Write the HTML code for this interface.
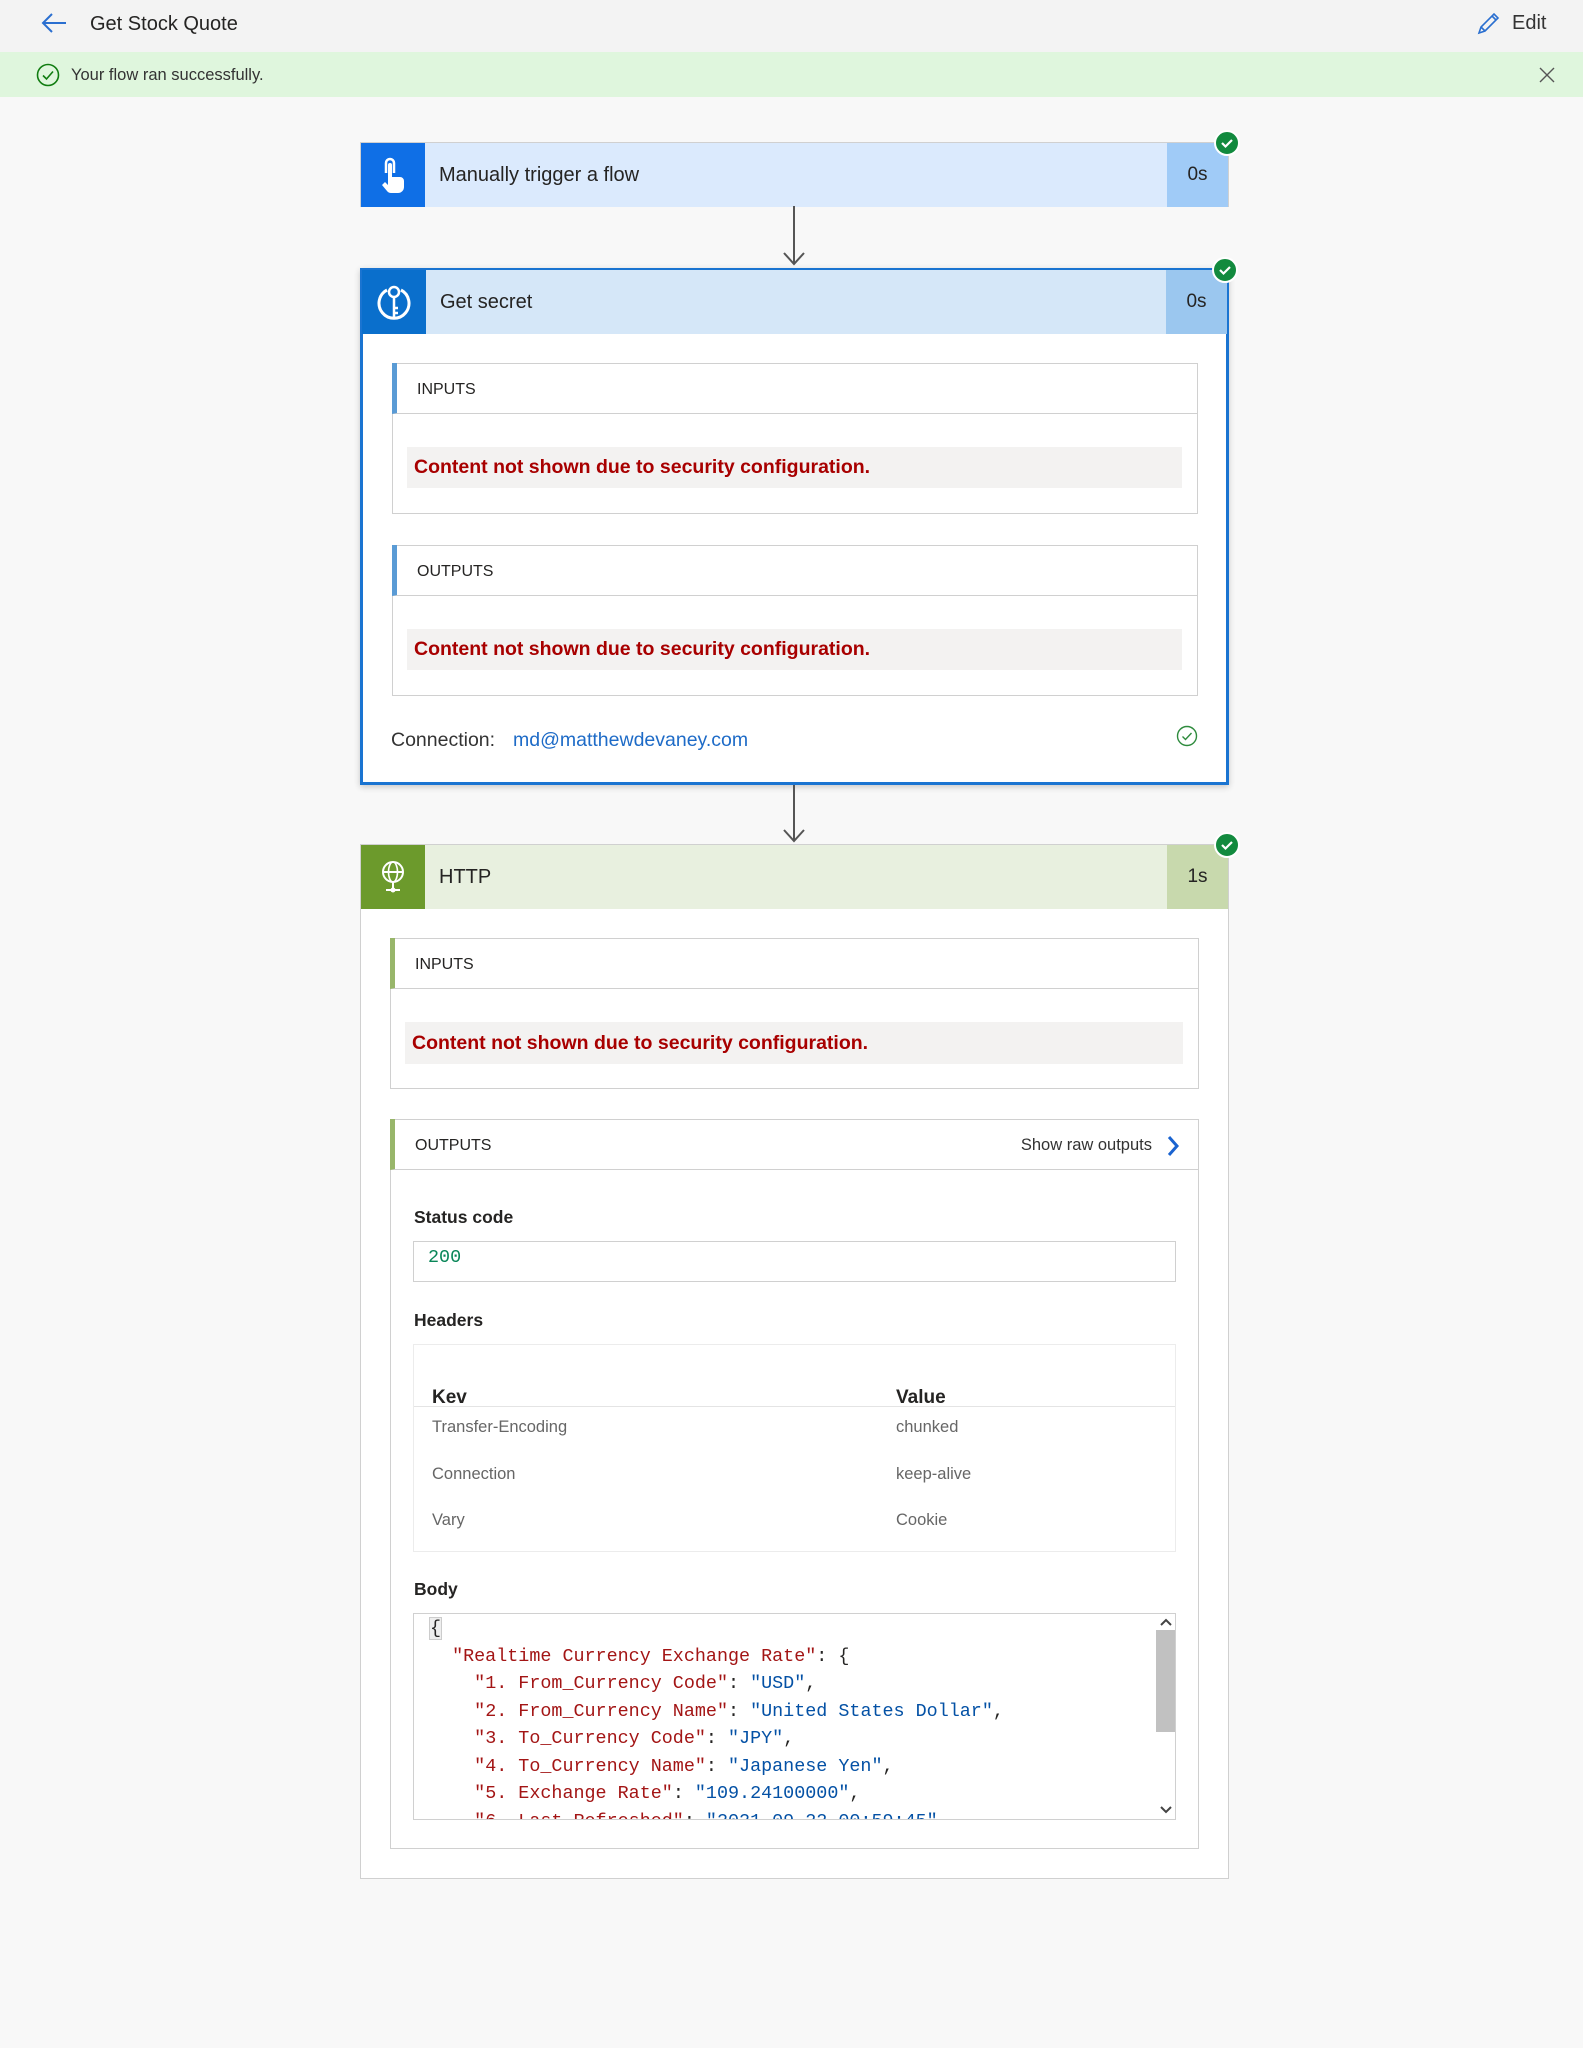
<!DOCTYPE html>
<html><head><meta charset="utf-8"><style>
*{box-sizing:border-box;margin:0;padding:0}
body{width:1583px;height:2048px;background:#f8f8f8;font-family:"Liberation Sans",sans-serif;color:#252423;position:relative;overflow:hidden}
.a{position:absolute}
.hdr{left:0;top:0;width:1583px;height:52px;background:#f3f3f3}
.ban{left:0;top:52px;width:1583px;height:45px;background:#dff6dd}
.card{position:absolute;left:360px;width:869px;background:#fff;border:1px solid #d0d0d0}
.ch{position:absolute;left:0;top:0;right:0;height:64px;display:flex;align-items:center}
.ico{width:64px;height:64px;display:flex;align-items:center;justify-content:center}
.ttl{flex:1;padding-left:14px;font-size:20px;height:100%;display:flex;align-items:center}
.dur{width:61px;height:100%;display:flex;align-items:center;justify-content:center;font-size:19px}
.chk{position:absolute;width:26px;height:26px;border-radius:50%;background:#128a3e;border:2px solid #fff}
.box{position:absolute;background:#fff;border:1px solid #d0d0d0}
.bh{height:51px;border-bottom:1px solid #d0d0d0;display:flex;align-items:center;padding-left:20px;padding-top:3px;font-size:16px;border-left:5px solid #5a9bd5;margin-left:-1px;margin-top:-1px}
.red{position:absolute;background:#f3f2f1;color:#a80000;font-weight:bold;font-size:19.5px;display:flex;align-items:center;padding-left:7px}
.lbl{position:absolute;font-size:17.5px;color:#252423}
.code{font-family:"Liberation Mono",monospace;font-size:18.4px;white-space:pre;line-height:27.5px;color:#252423}
.k{color:#a31515}.v{color:#0451a5}
</style></head><body>
<div class="a hdr"></div>
<svg class="a" style="left:40px;top:11px" width="28" height="24" viewBox="0 0 28 24"><path d="M26 12H3M12 3L3 12l9 9" stroke="#2a6fd0" stroke-width="2" fill="none"/></svg>
<div class="a" style="left:90px;top:13px;font-size:20px">Get Stock Quote</div>
<svg class="a" style="left:1476px;top:10px" width="26" height="26" viewBox="0 0 26 26"><path d="M3 23l2-6L18 4l4 4L9 21zM5 17l4 4M16 6l4 4" stroke="#2a6fd0" stroke-width="1.6" fill="none"/></svg>
<div class="a" style="left:1512px;top:12px;font-size:20px;color:#333">Edit</div>
<div class="a ban"></div>
<svg class="a" style="left:36px;top:63px" width="24" height="24" viewBox="0 0 24 24"><circle cx="12" cy="12" r="10.5" stroke="#107c10" stroke-width="1.6" fill="none"/><path d="M7 12.5l3.5 3.5L17 8.5" stroke="#107c10" stroke-width="1.6" fill="none"/></svg>
<div class="a" style="left:71px;top:66px;font-size:16.5px;color:#333">Your flow ran successfully.</div>
<svg class="a" style="left:1537px;top:65px" width="20" height="20" viewBox="0 0 20 20"><path d="M3 3l14 14M17 3L3 17" stroke="#555" stroke-width="1.4"/></svg>

<!-- trigger -->
<div class="card" style="top:142px;height:65px">
 <div class="ch" style="background:#dbeafd"><div class="ico" style="background:#0f6fe6"><svg width="34" height="40" viewBox="0 0 34 40"><path d="M10 18V8a4 4 0 0 1 8 0v10" stroke="#fff" stroke-width="2.5" fill="none"/><path d="M12 30V10a2 2 0 0 1 4 0v12h8a4 4 0 0 1 4 4v6a6 6 0 0 1-6 6h-7a5 5 0 0 1-4-2l-5-6 3-3z" fill="#fff"/></svg></div><div class="ttl">Manually trigger a flow</div><div class="dur" style="background:#a0cbf7">0s</div></div>
</div>
<div class="chk" style="left:1214px;top:130px"><svg width="22" height="22" viewBox="0 0 22 22"><path d="M6 11l3.5 3.5L16 8" stroke="#fff" stroke-width="2.2" fill="none"/></svg></div>
<svg class="a" style="left:779px;top:206px" width="30" height="62" viewBox="0 0 30 62"><path d="M15 0v58M5 47l10 11 10-11" stroke="#555" stroke-width="2" fill="none"/></svg>

<!-- get secret -->
<div class="card" style="top:268px;height:517px;border:3px solid #1a74d1;box-shadow:0 2px 6px rgba(0,0,0,.2)">
 <div class="ch" style="background:#d5e7f8;top:-1px;left:-1px;right:-1px"><div class="ico" style="background:#0a6fcc"><svg width="40" height="44" viewBox="0 0 40 44"><path d="M13 10A15 15 0 1 0 27 10" stroke="#fff" stroke-width="3" fill="none"/><circle cx="20" cy="12" r="5" stroke="#fff" stroke-width="2.5" fill="none"/><path d="M20 17v20M20 28h4M20 33h4" stroke="#fff" stroke-width="2.5"/></svg></div><div class="ttl">Get secret</div><div class="dur" style="background:#9bc7ef">0s</div></div>
</div>
<div class="chk" style="left:1212px;top:257px"><svg width="22" height="22" viewBox="0 0 22 22"><path d="M6 11l3.5 3.5L16 8" stroke="#fff" stroke-width="2.2" fill="none"/></svg></div>
<div class="box" style="left:392px;top:363px;width:806px;height:151px"><div class="bh">INPUTS</div></div>
<div class="red" style="left:407px;top:447px;width:775px;height:41px">Content not shown due to security configuration.</div>
<div class="box" style="left:392px;top:545px;width:806px;height:151px"><div class="bh">OUTPUTS</div></div>
<div class="red" style="left:407px;top:629px;width:775px;height:41px">Content not shown due to security configuration.</div>
<div class="a" style="left:391px;top:729px;font-size:19.5px;color:#333">Connection:</div>
<div class="a" style="left:513px;top:729px;font-size:19.5px;color:#1e6bc7">md@matthewdevaney.com</div>
<svg class="a" style="left:1176px;top:725px" width="22" height="22" viewBox="0 0 22 22"><circle cx="11" cy="11" r="9.5" stroke="#2e8b3d" stroke-width="1.4" fill="none"/><path d="M6.5 11.5l3 3L15.5 8" stroke="#2e8b3d" stroke-width="1.4" fill="none"/></svg>
<svg class="a" style="left:779px;top:785px" width="30" height="59" viewBox="0 0 30 59"><path d="M15 0v56M5 45l10 11 10-11" stroke="#555" stroke-width="2" fill="none"/></svg>

<!-- HTTP -->
<div class="card" style="top:844px;height:1035px">
 <div class="ch" style="background:#e8f0df"><div class="ico" style="background:#6c9a2c"><svg width="30" height="38" viewBox="0 0 30 38"><circle cx="15" cy="14" r="10" stroke="#fff" stroke-width="2" fill="none"/><ellipse cx="15" cy="14" rx="4.5" ry="10" stroke="#fff" stroke-width="1.6" fill="none"/><path d="M5 14h20M15 24v6M8 32h14" stroke="#fff" stroke-width="2"/><circle cx="15" cy="32" r="2.5" fill="#fff"/></svg></div><div class="ttl">HTTP</div><div class="dur" style="background:#c8d9ad">1s</div></div>
</div>
<div class="chk" style="left:1214px;top:832px"><svg width="22" height="22" viewBox="0 0 22 22"><path d="M6 11l3.5 3.5L16 8" stroke="#fff" stroke-width="2.2" fill="none"/></svg></div>
<div class="box" style="left:390px;top:938px;width:809px;height:151px"><div class="bh" style="border-left-color:#98b66a">INPUTS</div></div>
<div class="red" style="left:405px;top:1022px;width:778px;height:42px">Content not shown due to security configuration.</div>
<div class="box" style="left:390px;top:1119px;width:809px;height:730px"><div class="bh" style="border-left-color:#98b66a;justify-content:space-between;padding-right:22px">OUTPUTS<span style="font-size:16.5px;color:#333;display:flex;align-items:center;margin-right:-4px">Show raw outputs<svg style="margin-left:14px" width="14" height="22" viewBox="0 0 14 22"><path d="M3 2l8 9-8 9" stroke="#1a63d0" stroke-width="3" fill="none"/></svg></span></div></div>
<div class="lbl" style="left:414px;top:1207px;font-weight:600">Status code</div>
<div class="box" style="left:413px;top:1241px;width:763px;height:41px"><span class="code" style="position:absolute;left:14px;top:2px;color:#098658">200</span></div>
<div class="lbl" style="left:414px;top:1310px;font-weight:600">Headers</div>
<div class="box" style="left:413px;top:1344px;width:763px;height:208px;border-color:#ececec">
 <div class="a" style="left:0;right:0;top:61px;border-top:1px solid #e4e4e4"></div>
 <div class="a" style="left:18px;top:42px;font-size:19px;font-weight:600">Kev</div><div class="a" style="left:482px;top:42px;font-size:19px;font-weight:600">Value</div>
 <div class="a" style="left:18px;top:73px;font-size:16.5px;color:#666">Transfer-Encoding</div><div class="a" style="left:482px;top:73px;font-size:16.5px;color:#666">chunked</div>
 <div class="a" style="left:18px;top:120px;font-size:16.5px;color:#666">Connection</div><div class="a" style="left:482px;top:120px;font-size:16.5px;color:#666">keep-alive</div>
 <div class="a" style="left:18px;top:166px;font-size:16.5px;color:#666">Vary</div><div class="a" style="left:482px;top:166px;font-size:16.5px;color:#666">Cookie</div>
</div>
<div class="lbl" style="left:414px;top:1579px;font-weight:600">Body</div>
<div class="box" style="left:413px;top:1613px;width:763px;height:207px;overflow:hidden">
 <div class="code a" style="left:16px;top:1px"><span style="background:#eee;outline:1px solid #ccc">{</span>
  <span class="k">"Realtime Currency Exchange Rate"</span>: {
    <span class="k">"1. From_Currency Code"</span>: <span class="v">"USD"</span>,
    <span class="k">"2. From_Currency Name"</span>: <span class="v">"United States Dollar"</span>,
    <span class="k">"3. To_Currency Code"</span>: <span class="v">"JPY"</span>,
    <span class="k">"4. To_Currency Name"</span>: <span class="v">"Japanese Yen"</span>,
    <span class="k">"5. Exchange Rate"</span>: <span class="v">"109.24100000"</span>,
    <span class="k">"6. Last Refreshed"</span>: <span class="v">"2021-09-22 00:59:45"</span>,</div>
 <div class="a" style="left:742px;top:0;width:20px;height:206px;background:#fff"></div>
 <div class="a" style="left:742px;top:16px;width:20px;height:102px;background:#c1c1c1"></div>
 <svg class="a" style="left:744px;top:2px" width="16" height="12" viewBox="0 0 16 12"><path d="M3 9l5-5 5 5" stroke="#444" stroke-width="2" fill="none"/></svg>
 <svg class="a" style="left:744px;top:190px" width="16" height="12" viewBox="0 0 16 12"><path d="M3 3l5 5 5-5" stroke="#444" stroke-width="2" fill="none"/></svg>
</div>
</body></html>
